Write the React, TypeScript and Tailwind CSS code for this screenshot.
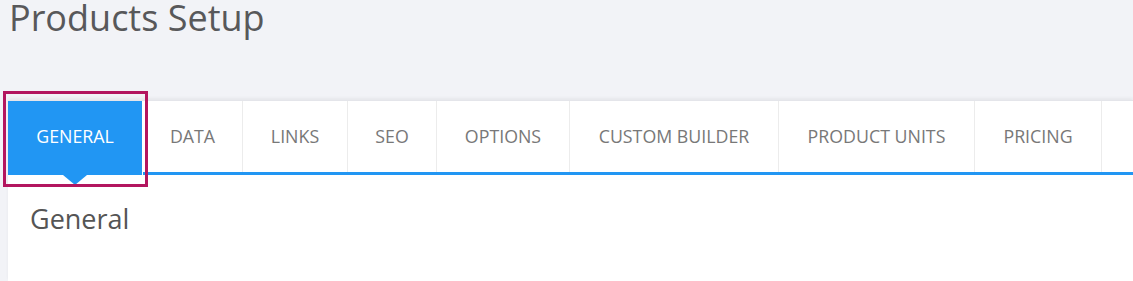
const tabs = [
  { label: 'GENERAL', w: 'w-[135px]' },
  { label: 'DATA', w: 'w-[100px]' },
  { label: 'LINKS', w: 'w-[105px]' },
  { label: 'SEO', w: 'w-[89px]' },
  { label: 'OPTIONS', w: 'w-[133px]' },
  { label: 'CUSTOM BUILDER', w: 'w-[209px]' },
  { label: 'PRODUCT UNITS', w: 'w-[196px]' },
  { label: 'PRICING', w: 'w-[127px]' },
];

function App() {
  const active = 0;

  return (
    <div
      className="flex h-[281px] w-full flex-col overflow-hidden bg-[#f2f3f7] pl-2"
      style={{ fontFamily: '"Open Sans", "Liberation Sans", sans-serif' }}
    >
      <h1 className="pt-[2px] pl-[1px] text-[36px] leading-[32px] font-normal text-[#58585a]">Products Setup</h1>

      <div className="relative mt-[66px] flex-1 border-t border-[#e4e5ea] bg-white shadow-[0_-2px_3px_rgba(0,0,0,0.05)]">
        <div className="flex h-[74px] border-b-[3px] border-[#2196f3]">
          {tabs.map((t, i) => (
            <div
              key={t.label}
              className={
                i === active
                  ? `relative -mb-[3px] flex shrink-0 items-center justify-center border-r border-white bg-[#2196f3] pb-[3px] text-[17.8px] whitespace-nowrap text-white ${t.w}`
                  : `flex shrink-0 items-center justify-center border-r border-[#ececec] text-[17.8px] whitespace-nowrap text-[#787878] ${t.w}`
              }
            >
              {t.label}
              {i === active && (
                <span className="absolute top-full left-1/2 h-0 w-0 -translate-x-1/2 border-x-[12px] border-t-[10px] border-x-transparent border-t-[#2196f3]" />
              )}
            </div>
          ))}
          <div className="flex-1" />
        </div>

        {/* highlight frame around the active tab */}
        <div className="pointer-events-none absolute -top-[10px] -left-[5px] h-[96px] w-[145px] border-[3px] border-[#b3165f]" />

        <div className="px-[22px] pt-[30px]">
          <h2 className="text-[27px] leading-none font-normal text-[#555555]">General</h2>
        </div>
      </div>
    </div>
  );
}

export default App;
